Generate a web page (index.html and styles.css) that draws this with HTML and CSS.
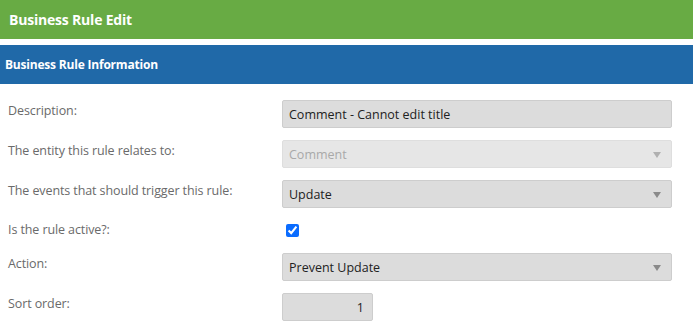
FILE: index.html
```html
<!DOCTYPE html>
<html lang="en">
<head>
    <meta charset="UTF-8">
    <meta name="viewport" content="width=device-width, initial-scale=1.0">
    <title>Business Rule Edit</title>
    <link rel="stylesheet" href="styles.css">
</head>
<body>
    <h1 class="page-title">Business Rule Edit</h1>
    <div class="panel">
        <h2 class="panel-title">Business Rule Information</h2>
        <form class="rule-form">
            <label class="field-label" for="description">Description:</label>
            <div class="field">
                <input class="text-input" type="text" id="description" value="Comment - Cannot edit title">
            </div>

            <label class="field-label" for="entity">The entity this rule relates to:</label>
            <div class="field">
                <div class="select-wrap disabled">
                    <select class="select-input" id="entity" disabled>
                        <option>Comment</option>
                    </select>
                </div>
            </div>

            <label class="field-label" for="events">The events that should trigger this rule:</label>
            <div class="field">
                <div class="select-wrap">
                    <select class="select-input" id="events">
                        <option>Update</option>
                        <option>Insert</option>
                        <option>Delete</option>
                    </select>
                </div>
            </div>

            <label class="field-label check-label" for="active">Is the rule active?:</label>
            <div class="field check-field">
                <input class="check-input" type="checkbox" id="active" checked>
            </div>

            <label class="field-label" for="action">Action:</label>
            <div class="field">
                <div class="select-wrap">
                    <select class="select-input" id="action">
                        <option>Prevent Update</option>
                        <option>Allow Update</option>
                    </select>
                </div>
            </div>

            <label class="field-label" for="sortorder">Sort order:</label>
            <div class="field">
                <input class="text-input number-input" type="text" id="sortorder" value="1">
            </div>
        </form>
    </div>
</body>
</html>
```

FILE: styles.css
```css
body {
    margin: 0;
    font-family: "Open Sans", "Noto Sans", Arial, sans-serif;
    background: #fff;
}
.page-title {
    margin: 0 0 6px 0;
    height: 39px;
    line-height: 39px;
    padding-left: 9px;
    background: #68ab44;
    color: #fff;
    font-size: 14px;
    font-weight: 700;
    letter-spacing: -0.2px;
}
.panel-title {
    margin: 0;
    height: 39px;
    line-height: 39px;
    padding-left: 5px;
    background: #2069a8;
    color: #fff;
    font-size: 12px;
    font-weight: 700;
    letter-spacing: -0.2px;
}
.rule-form {
    display: grid;
    grid-template-columns: 274px 390px;
    row-gap: 12px;
    padding: 16px 0 0 8px;
}
.field-label {
    color: #6a6a6a;
    font-size: 12.5px;
    line-height: 18px;
    padding-top: 2px;
    letter-spacing: -0.1px;
}
.check-label {
    padding-top: 1px;
}
.field {
    height: 28px;
}
.check-field {
    height: 21px;
}
.text-input,
.select-input {
    box-sizing: border-box;
    width: 100%;
    height: 28px;
    margin: 0;
    padding: 0 6px;
    border: 1px solid #cdcdcd;
    border-radius: 2px;
    background: #dcdcdc;
    color: #222;
    font-family: inherit;
    font-size: 12.5px;
    outline: none;
}
.select-input {
    appearance: none;
    -webkit-appearance: none;
}
.number-input {
    width: 91px;
    text-align: right;
    padding-right: 8px;
}
.select-wrap {
    position: relative;
}
.select-wrap::after {
    content: "";
    position: absolute;
    right: 11px;
    top: 12px;
    border-left: 4px solid transparent;
    border-right: 4px solid transparent;
    border-top: 6px solid #8a8a8a;
    pointer-events: none;
}
.select-wrap.disabled .select-input {
    background: #e6e6e6;
    border-color: #dedede;
    color: #a9a9a9;
    opacity: 1;
}
.select-wrap.disabled::after {
    border-top-color: #b0b0b0;
}
.check-input {
    width: 13px;
    height: 13px;
    margin: 3px 0 0 4px;
    accent-color: #0a6cff;
}
```
